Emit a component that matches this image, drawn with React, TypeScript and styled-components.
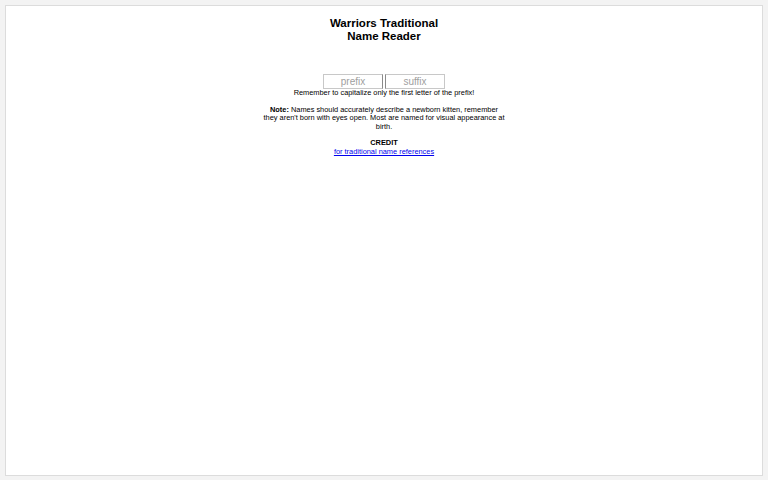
import React from "react";
import styled, { createGlobalStyle } from "styled-components";

const Global = createGlobalStyle`
  html, body { margin: 0; padding: 0; background: #f3f3f3; }
  body { font-family: "Liberation Sans", Arial, sans-serif; }
`;

const Page = styled.div`
  box-sizing: border-box;
  width: 768px;
  height: 480px;
  padding: 5px 5px 4px 5px;
`;

const Panel = styled.main`
  box-sizing: border-box;
  height: 471px;
  background: #fff;
  border: 1px solid #dcdcdc;
  display: flex;
  flex-direction: column;
  align-items: center;
  padding-top: 11px;
  text-align: center;
  color: #000;
`;

const Title = styled.h1`
  margin: 0;
  font-size: 11.5px;
  line-height: 13px;
  font-weight: bold;
`;

const Form = styled.div`
  display: flex;
  gap: 2px;
  margin-top: 31px;
`;

const NameInput = styled.input<{ $side: "left" | "right" }>`
  box-sizing: border-box;
  width: 60px;
  height: 15px;
  padding: 0;
  margin: 0;
  border: 1px solid #c8c8c8;
  ${(p) => (p.$side === "left" ? "border-right-color: #8a8a8a;" : "border-left-color: #8a8a8a;")}
  font-family: "Liberation Sans", Arial, sans-serif;
  font-size: 10px;
  text-align: center;
  &::placeholder { color: #a0a0a0; }
`;

const Small = styled.p<{ $mt?: number }>`
  margin: ${(p) => p.$mt ?? 0}px 0 0;
  font-size: 7.4px;
  line-height: 8.5px;
`;

const Note = styled(Small)`
  width: 242px;
`;

const Link = styled.a`
  color: #0000ee;
  text-decoration: underline;
`;

export default function App() {
  return (
    <>
      <Global />
      <Page>
        <Panel>
          <Title>
            Warriors Traditional
            <br />
            Name Reader
          </Title>
          <Form>
            <NameInput $side="left" placeholder="prefix" />
            <NameInput $side="right" placeholder="suffix" />
          </Form>
          <Small>Remember to capitalize only the first letter of the prefix!</Small>
          <Note $mt={8}>
            <b>Note:</b> Names should accurately describe a newborn kitten, remember they aren't born with
            eyes open. Most are named for visual appearance at birth.
          </Note>
          <Small $mt={8}>
            <b>CREDIT</b>
            <br />
            <Link href="#">for traditional name references</Link>
          </Small>
        </Panel>
      </Page>
    </>
  );
}
